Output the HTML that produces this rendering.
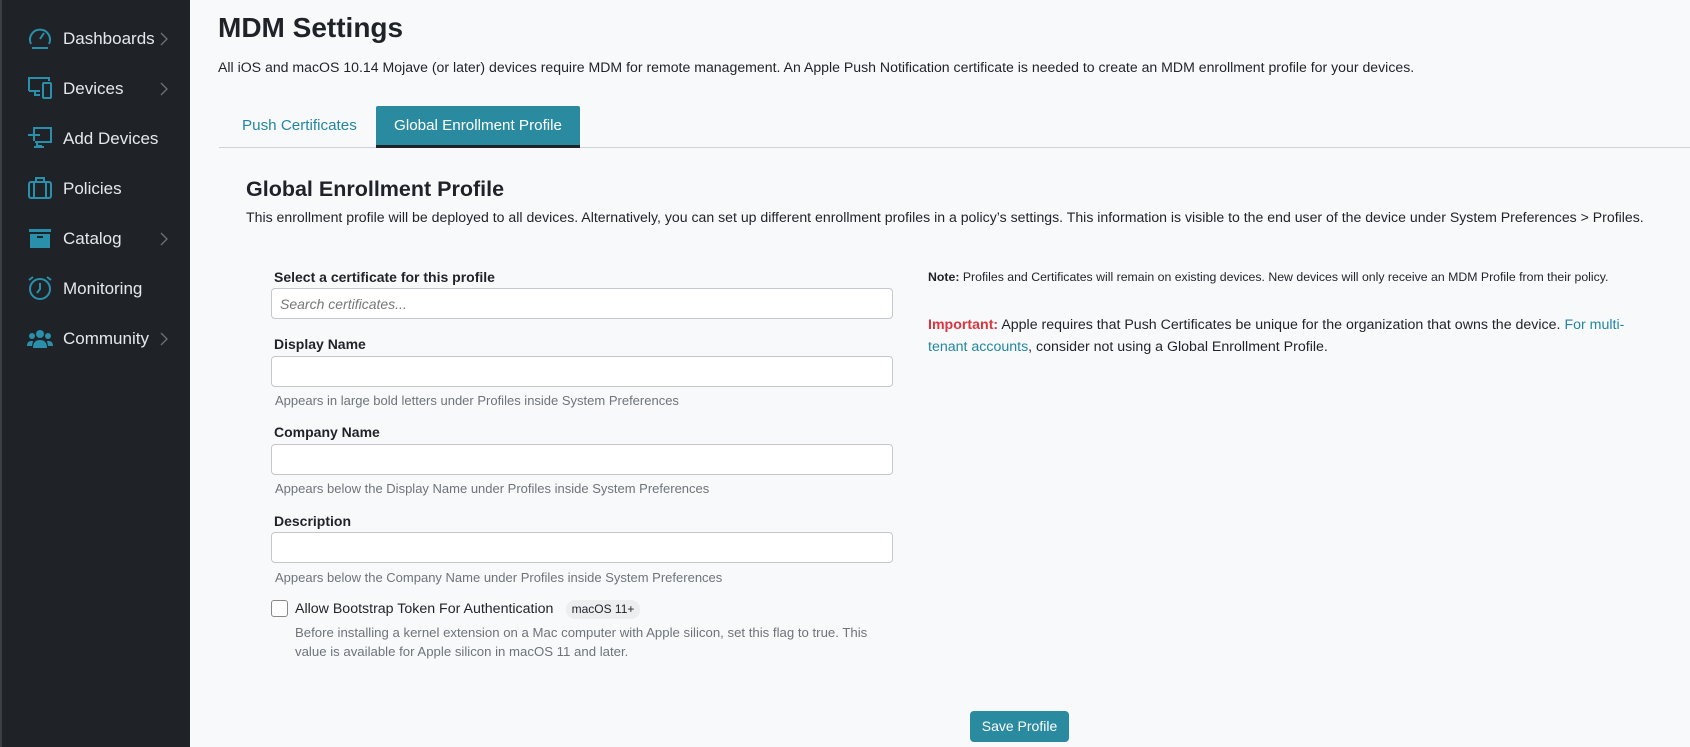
<!DOCTYPE html>
<html><head><meta charset="utf-8"><style>
*{box-sizing:border-box;margin:0;padding:0}
body{width:1690px;height:747px;overflow:hidden;background:#f8f9fb;font-family:"Liberation Sans",sans-serif;color:#1f2328;position:relative}
.sb{position:absolute;left:0;top:0;width:190px;height:747px;background:#1f2328;border-left:2px solid #3a3f44}
.it{position:absolute;left:61px;font-size:17px;color:#e6e8ea;line-height:20px}
.ic{position:absolute;left:25px;width:26px;height:26px}
.ch{position:absolute;left:158px;width:8px;height:14px}
.a{position:absolute;white-space:nowrap}
.lbl{font-size:14px;font-weight:bold;left:274px}
.in{position:absolute;left:271px;width:622px;height:31px;background:#fff;border:1px solid #c4c8cc;border-radius:4px}
.hint{font-size:13px;color:#6e7479;left:275px}
</style></head><body>
<div class="sb">
<svg class="ic" style="top:24px" viewBox="0 0 26 26" fill="none" stroke="#2a8fab" stroke-width="2"><path d="M4 20A10 10 0 1 1 22 20"/><path d="M13 15l4-6"/><path d="M5 24h16"/></svg>
<div class="it" style="top:29px">Dashboards</div><svg class="ch" style="top:32px" viewBox="0 0 8 14" fill="none" stroke="#6c7277" stroke-width="1.3"><path d="M1 1l6 6-6 6"/></svg>
<svg class="ic" style="top:75px" viewBox="0 0 26 26" fill="none" stroke="#2a8fab" stroke-width="2"><path d="M2 16V3h20v3"/><path d="M2 16h11M8 16v4h5"/><rect x="16" y="8" width="8" height="15" rx="1"/></svg>
<div class="it" style="top:79px">Devices</div><svg class="ch" style="top:82px" viewBox="0 0 8 14" fill="none" stroke="#6c7277" stroke-width="1.3"><path d="M1 1l6 6-6 6"/></svg>
<svg class="ic" style="top:125px" viewBox="0 0 26 26" fill="none" stroke="#2a8fab" stroke-width="2"><path d="M6 3h18v14H8"/><path d="M1 10h12M7 4v12"/><path d="M10 17v4h5M7 22h10"/></svg>
<div class="it" style="top:129px">Add Devices</div>
<svg class="ic" style="top:175px" viewBox="0 0 26 26" fill="none" stroke="#2a8fab" stroke-width="2"><rect x="2" y="7" width="22" height="16" rx="2"/><path d="M9 7V3h8v4M7 7v16M19 7v16"/></svg>
<div class="it" style="top:179px">Policies</div>
<svg class="ic" style="top:226px" viewBox="0 0 26 26"><rect x="2" y="3" width="22" height="3" fill="#2a8fab"/><rect x="3" y="8" width="20" height="14" fill="#2a8fab"/><rect x="10" y="10" width="6" height="2" fill="#1f2328"/></svg>
<div class="it" style="top:229px">Catalog</div><svg class="ch" style="top:232px" viewBox="0 0 8 14" fill="none" stroke="#6c7277" stroke-width="1.3"><path d="M1 1l6 6-6 6"/></svg>
<svg class="ic" style="top:275px" viewBox="0 0 26 26" fill="none" stroke="#2a8fab" stroke-width="2"><circle cx="13" cy="14" r="10"/><path d="M13 8v6l-3 4M2 5l4-3M24 5l-4-3"/></svg>
<div class="it" style="top:279px">Monitoring</div>
<svg class="ic" style="top:326px" viewBox="0 0 26 26" fill="#2a8fab"><circle cx="13" cy="8" r="4"/><circle cx="5" cy="10" r="3"/><circle cx="21" cy="10" r="3"/><path d="M6 22c0-6 3-8 7-8s7 2 7 8zM0 20c0-4 2-5 5-5l1 0-1 5zM26 20c0-4-2-5-5-5h-1l1 5z"/></svg>
<div class="it" style="top:329px">Community</div><svg class="ch" style="top:332px" viewBox="0 0 8 14" fill="none" stroke="#6c7277" stroke-width="1.3"><path d="M1 1l6 6-6 6"/></svg>
</div>

<div class="a" style="left:218px;top:12px;font-size:28px;font-weight:bold">MDM Settings</div>
<div class="a" style="left:218px;top:59px;font-size:14.1px">All iOS and macOS 10.14 Mojave (or later) devices require MDM for remote management. An Apple Push Notification certificate is needed to create an MDM enrollment profile for your devices.</div>

<div class="a" style="left:219px;top:147px;width:1471px;height:1px;background:#d0d4d8"></div>
<div class="a" style="left:242px;top:117px;font-size:15.2px;color:#23879f">Push Certificates</div>
<div class="a" style="left:376px;top:106px;width:204px;height:42px;background:#2a8aa0;border-bottom:3px solid #1f2328;color:#fff;font-size:15.2px;text-align:center;line-height:40px;border-radius:2px 2px 0 0">Global Enrollment Profile</div>

<div class="a" style="left:246px;top:177px;font-size:21.5px;font-weight:bold">Global Enrollment Profile</div>
<div class="a" style="left:246px;top:209px;font-size:14.1px">This enrollment profile will be deployed to all devices. Alternatively, you can set up different enrollment profiles in a policy’s settings. This information is visible to the end user of the device under System Preferences &gt; Profiles.</div>

<div class="a lbl" style="top:269px">Select a certificate for this profile</div>
<div class="in" style="top:288px"><span style="position:absolute;left:8px;top:7px;font-size:14px;font-style:italic;color:#777">Search certificates...</span></div>
<div class="a lbl" style="top:336px">Display Name</div>
<div class="in" style="top:356px"></div>
<div class="a hint" style="top:393px">Appears in large bold letters under Profiles inside System Preferences</div>
<div class="a lbl" style="top:424px">Company Name</div>
<div class="in" style="top:444px"></div>
<div class="a hint" style="top:481px">Appears below the Display Name under Profiles inside System Preferences</div>
<div class="a lbl" style="top:513px">Description</div>
<div class="in" style="top:532px"></div>
<div class="a hint" style="top:570px">Appears below the Company Name under Profiles inside System Preferences</div>

<div class="a" style="left:271px;top:600px;width:17px;height:17px;border:1px solid #888;border-radius:3px;background:#fff"></div>
<div class="a" style="left:295px;top:601px;font-size:14.2px">Allow Bootstrap Token For Authentication</div>
<div class="a" style="left:566px;top:600px;width:74px;height:19px;background:#eceef0;border-radius:9px;font-size:12px;text-align:center;line-height:19px">macOS 11+</div>
<div class="a hint" style="left:295px;top:623px;line-height:19px;font-size:13.2px">Before installing a kernel extension on a Mac computer with Apple silicon, set this flag to true. This<br>value is available for Apple silicon in macOS 11 and later.</div>

<div class="a" style="left:928px;top:270px;font-size:12.3px"><b>Note:</b> Profiles and Certificates will remain on existing devices. New devices will only receive an MDM Profile from their policy.</div>
<div class="a" style="left:928px;top:314px;font-size:14.2px;line-height:22px;white-space:normal;width:720px"><b style="color:#d9363e">Important:</b> Apple requires that Push Certificates be unique for the organization that owns the device. <span style="color:#23879f">For multi-<br>tenant accounts</span>, consider not using a Global Enrollment Profile.</div>

<div class="a" style="left:970px;top:711px;width:99px;height:31px;background:#2a8aa0;color:#fff;border-radius:4px;font-size:14px;text-align:center;line-height:31px">Save Profile</div>
</body></html>
